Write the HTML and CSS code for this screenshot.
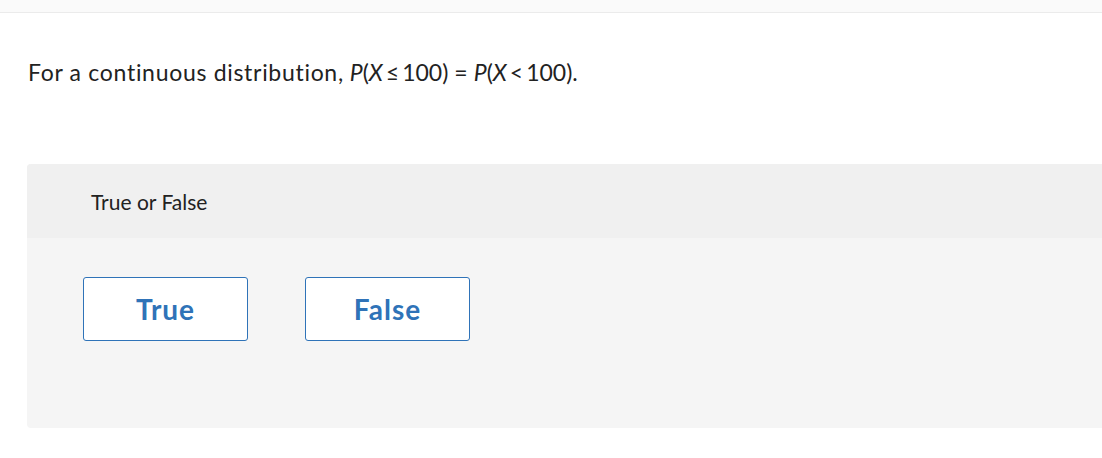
FILE: index.html
```html
<!DOCTYPE html>
<html lang="en">
<head>
<meta charset="utf-8">
<title>True or False</title>
<link rel="stylesheet" href="styles.css">
</head>
<body>
  <div class="topbar"></div>
  <main class="content">
    <p class="prompt"><span class="lead">For a continuous distribution,</span> <span class="math"><i>P</i>(<i>X</i><span class="op">≤</span>100)<span class="eq">=</span><i>P</i>(<i>X</i><span class="op">&lt;</span>100).</span></p>
    <section class="answer-panel">
      <header class="panel-head">True or False</header>
      <div class="panel-body">
        <button class="choice" type="button">True</button>
        <button class="choice" type="button">False</button>
      </div>
    </section>
  </main>
</body>
</html>
```
FILE: styles.css
```css
html, body {
  margin: 0;
  padding: 0;
  background: #ffffff;
}

body {
  font-family: Lato, "Open Sans", "Liberation Sans", sans-serif;
  color: #222222;
  overflow: hidden;
}

.topbar {
  height: 12px;
  background: #fafafa;
  border-bottom: 1px solid #ebebeb;
}

.content {
  padding-left: 27px;
}

.prompt {
  margin: 0;
  padding-top: 45px;
  padding-left: 1px;
  font-size: 23px;
  line-height: 28px;
}

.prompt .lead {
  letter-spacing: 0.7px;
}

.math i {
  font-style: italic;
}

.math .op {
  margin: 0 3px;
}

.math .eq {
  margin: 0 6px;
}

.answer-panel {
  margin-top: 78px;
  height: 264px;
  border-radius: 4px 0 0 4px;
  background: #f5f5f5;
  overflow: hidden;
}

.panel-head {
  height: 74px;
  box-sizing: border-box;
  padding-left: 64px;
  display: flex;
  align-items: center;
  background: #f0f0f0;
  font-size: 21px;
}

.panel-body {
  display: flex;
  gap: 57px;
  padding: 39px 0 0 56px;
}

.choice {
  width: 165px;
  height: 64px;
  box-sizing: border-box;
  border: 1px solid #2f73b8;
  border-radius: 3px;
  background: #ffffff;
  color: #2f73b8;
  font-family: Lato, "Open Sans", "Liberation Sans", sans-serif;
  font-weight: 700;
  font-size: 28px;
  letter-spacing: 1px;
  padding: 0;
  cursor: pointer;
}
```
